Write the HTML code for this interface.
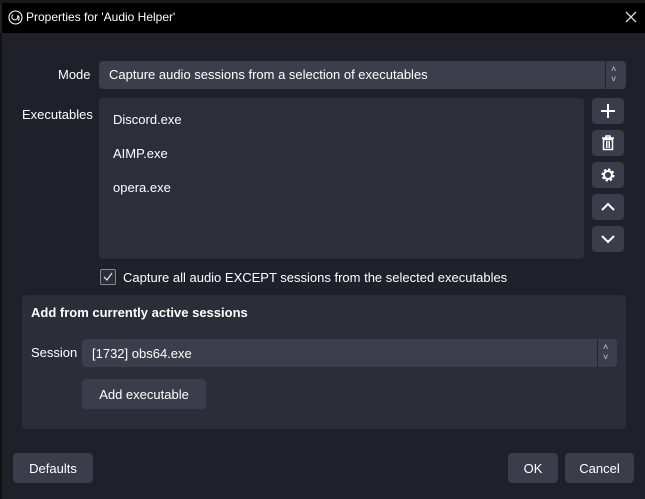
<!DOCTYPE html>
<html><head><style>
*{box-sizing:border-box;margin:0;padding:0}
body{width:645px;height:499px;background:#1f212a;font-family:"Liberation Sans",sans-serif;font-size:13px;color:#fff;position:relative;overflow:hidden}
.a{position:absolute}
.btn{position:absolute;background:#3b3e4a;border-radius:4px;display:flex;align-items:center;justify-content:center;font-size:13px}
.combo{position:absolute;background:#3c3f4b;border-radius:4px}
.sb{position:absolute;background:#2c2f3a;border-radius:4px}
</style></head><body>
<div class="a" style="left:0;top:0;width:645px;height:4px;background:#1a1a1a"></div>
<div class="a" style="left:2px;top:3px;width:643px;height:30px;background:#000"></div>
<svg class="a" style="left:8px;top:10px" width="15" height="15" viewBox="0 0 15 15"><circle cx="7.5" cy="7.5" r="6.5" fill="none" stroke="#fff" stroke-width="1.1"/><path d="M5 4.5a3 3 0 1 0 4.5 1M10 10.5a3 3 0 0 0-0.5-5" fill="none" stroke="#fff" stroke-width="1"/></svg>
<div class="a" style="left:26px;top:10px;font-size:12px">Properties for 'Audio Helper'</div>
<svg class="a" style="left:625px;top:11px" width="12" height="12"><path d="M1 1l10 10M11 1L1 11" stroke="#ddd" stroke-width="1.3"/></svg>
<div class="a" style="left:0;top:33px;width:2px;height:466px;background:#111"></div>

<div class="a" style="left:58px;top:67px">Mode</div>
<div class="combo" style="left:99px;top:61px;width:527px;height:28px"></div>
<div class="a" style="left:605px;top:61px;width:1px;height:28px;background:#22242c"></div>
<div class="a" style="left:109px;top:67px">Capture audio sessions from a selection of executables</div>
<div class="a" style="left:611px;top:64px;font-size:9px;line-height:10px;color:#ccc">˄<br>˅</div>

<div class="a" style="left:22px;top:107px">Executables</div>
<div class="sb" style="left:99px;top:98px;width:485px;height:161px"></div>
<div class="a" style="left:113px;top:112px">Discord.exe</div>
<div class="a" style="left:113px;top:146px">AIMP.exe</div>
<div class="a" style="left:113px;top:180px">opera.exe</div>

<div class="btn" style="left:592px;top:98px;width:32px;height:26px"><svg width="16" height="16"><path d="M8 1v14M1 8h14" stroke="#fff" stroke-width="2"/></svg></div>
<div class="btn" style="left:592px;top:130px;width:32px;height:26px"><svg width="14" height="16"><path d="M1 3h12M5 3V1h4v2M2.5 4.5h9v10h-9z" fill="none" stroke="#fff" stroke-width="1.5"/><path d="M5.5 6v7M7 6v7M8.5 6v7" stroke="#fff"/></svg></div>
<div class="btn" style="left:592px;top:162px;width:32px;height:26px"><svg width="16" height="16"><circle cx="8" cy="8" r="5" fill="none" stroke="#fff" stroke-width="3" stroke-dasharray="2.2 1.7"/><circle cx="8" cy="8" r="4" fill="none" stroke="#fff" stroke-width="2"/></svg></div>
<div class="btn" style="left:592px;top:194px;width:32px;height:26px"><svg width="16" height="10"><path d="M2 8l6-6 6 6" fill="none" stroke="#fff" stroke-width="2"/></svg></div>
<div class="btn" style="left:592px;top:226px;width:32px;height:26px"><svg width="16" height="10"><path d="M2 2l6 6 6-6" fill="none" stroke="#fff" stroke-width="2"/></svg></div>

<div class="a" style="left:100px;top:269px;width:16px;height:16px;border:1px solid #888;border-radius:2px;background:#2b2d38"></div>
<svg class="a" style="left:102px;top:271px" width="12" height="12"><path d="M2 6l3 3 5-7" fill="none" stroke="#ddd" stroke-width="1.3"/></svg>
<div class="a" style="left:123px;top:270px">Capture all audio EXCEPT sessions from the selected executables</div>

<div class="a" style="left:22px;top:295px;width:604px;height:134px;background:#2b2d38;border-radius:4px"></div>
<div class="a" style="left:31px;top:305px;font-weight:bold">Add from currently active sessions</div>
<div class="a" style="left:31px;top:345px">Session</div>
<div class="combo" style="left:82px;top:339px;width:535px;height:28px"></div>
<div class="a" style="left:597px;top:339px;width:1px;height:28px;background:#22242c"></div>
<div class="a" style="left:92px;top:346px">[1732] obs64.exe</div>
<div class="a" style="left:603px;top:342px;font-size:9px;line-height:10px;color:#ccc">˄<br>˅</div>
<div class="btn" style="left:82px;top:379px;width:124px;height:30px">Add executable</div>

<div class="btn" style="left:13px;top:453px;width:80px;height:30px">Defaults</div>
<div class="btn" style="left:508px;top:453px;width:50px;height:30px">OK</div>
<div class="btn" style="left:565px;top:453px;width:69px;height:30px">Cancel</div>
</body></html>
